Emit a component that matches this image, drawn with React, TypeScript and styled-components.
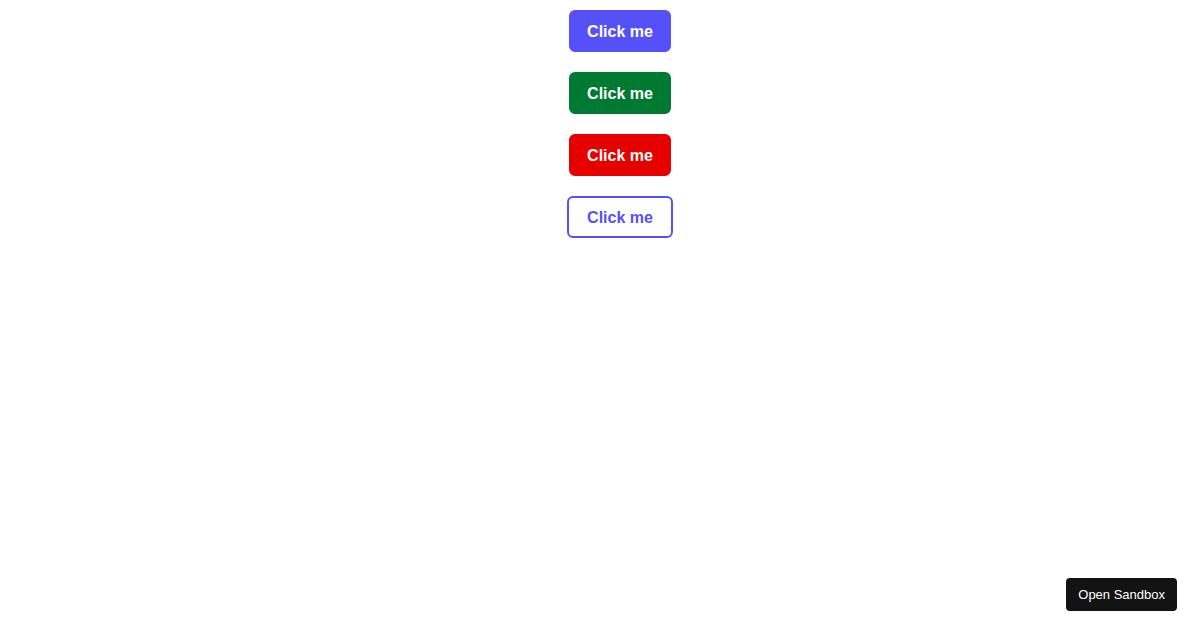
import React from 'react';
import styled, { createGlobalStyle, css } from 'styled-components';

const GlobalStyle = createGlobalStyle`
  html, body {
    margin: 0;
    padding: 0;
    background: #ffffff;
    font-family: "Liberation Sans", Arial, sans-serif;
  }
`;

type Variant = 'primary' | 'success' | 'danger' | 'outline';

const colors: Record<Variant, string> = {
  primary: '#5650f9',
  success: '#007a33',
  danger: '#e60000',
  outline: '#5650f9',
};

const Page = styled.main`
  min-height: 630px;
  display: flex;
  flex-direction: column;
  align-items: center;
  gap: 20px;
  padding: 10px 0 0 40px;
  box-sizing: border-box;
`;

const Button = styled.button<{ $variant: Variant }>`
  height: 42px;
  padding: 2px 16px 0;
  border-radius: 6px;
  border: 2px solid ${(p) => colors[p.$variant]};
  background: ${(p) => colors[p.$variant]};
  color: #ffffff;
  font-family: "Liberation Sans", Arial, sans-serif;
  font-size: 16px;
  font-weight: 700;
  cursor: pointer;
  box-sizing: border-box;

  ${(p) =>
    p.$variant === 'outline' &&
    css`
      background: #ffffff;
      color: ${colors.outline};
      padding: 2px 18px 0;
    `}
`;

const SandboxLink = styled.a`
  position: fixed;
  right: 23px;
  bottom: 19px;
  height: 33px;
  padding: 0 12px;
  display: flex;
  align-items: center;
  background: #131313;
  color: #ffffff;
  border-radius: 4px;
  font-family: "Liberation Sans", Arial, sans-serif;
  font-size: 13px;
  text-decoration: none;
  box-sizing: border-box;
`;

const App = () => {
  return (
    <>
      <GlobalStyle />
      <Page>
        <Button $variant="primary">Click me</Button>
        <Button $variant="success">Click me</Button>
        <Button $variant="danger">Click me</Button>
        <Button $variant="outline">Click me</Button>
      </Page>
      <SandboxLink href="#">Open Sandbox</SandboxLink>
    </>
  );
};

export default App;
